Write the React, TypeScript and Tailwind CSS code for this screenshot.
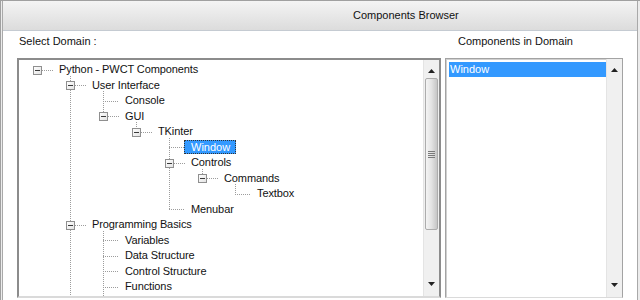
import React from "react";

type Row = { label: string; level: number; selected?: boolean; more?: boolean };

// "more" = the node has further children below the visible area
const rows: Row[] = [
  { label: "Python - PWCT Components", level: 0, more: true },
  { label: "User Interface", level: 1 },
  { label: "Console", level: 2 },
  { label: "GUI", level: 2 },
  { label: "TKinter", level: 3 },
  { label: "Window", level: 4, selected: true },
  { label: "Controls", level: 4 },
  { label: "Commands", level: 5 },
  { label: "Textbox", level: 6 },
  { label: "Menubar", level: 4 },
  { label: "Programming Basics", level: 1, more: true },
  { label: "Variables", level: 2 },
  { label: "Data Structure", level: 2 },
  { label: "Control Structure", level: 2 },
  { label: "Functions", level: 2 },
];

const ROW = 15.5;
const PAD_TOP = 2;
const cy = (i: number) => Math.round(PAD_TOP + ROW / 2 + ROW * i);
const boxX = (l: number) => 18 + 33 * l;
const textX = (l: number) => 40 + 33 * l;

const hasChildren = (i: number) => i + 1 < rows.length && rows[i + 1].level > rows[i].level;

function TreeLines() {
  const lines: React.ReactNode[] = [];
  const boxes: React.ReactNode[] = [];
  rows.forEach((r, i) => {
    const y = cy(i) + 0.5;
    if (hasChildren(i)) {
      let last = i + 1;
      for (let j = i + 1; j < rows.length && rows[j].level > r.level; j++) {
        if (rows[j].level === r.level + 1) last = j;
      }
      const vx = boxX(r.level + 1) + 0.5;
      const endY = r.more ? 240 : cy(last) + 1;
      lines.push(<line key={`v${i}`} x1={vx} x2={vx} y1={cy(i) + 6} y2={endY} />);
      lines.push(<line key={`h${i}`} x1={boxX(r.level) + 5} x2={textX(r.level) - 6} y1={y} y2={y} />);
      const bx = boxX(r.level);
      const by = cy(i);
      boxes.push(
        <g key={`b${i}`}>
          <rect x={bx - 3.5} y={by - 3.5} width={8} height={8} fill="url(#boxfill)" stroke="#8f8f8f" />
          <line x1={bx - 2} x2={bx + 3} y1={by + 0.5} y2={by + 0.5} stroke="#3a3a3a" />
        </g>
      );
    } else {
      lines.push(<line key={`h${i}`} x1={boxX(r.level)} x2={textX(r.level) - 6} y1={y} y2={y} />);
    }
  });
  return (
    <svg className="absolute left-0 top-0" width={403} height={240}>
      <defs>
        <linearGradient id="boxfill" x1="0" y1="0" x2="1" y2="1">
          <stop offset="0" stopColor="#ffffff" />
          <stop offset="1" stopColor="#e2e2e2" />
        </linearGradient>
      </defs>
      <g stroke="#9c9c9c" strokeDasharray="1 1">{lines}</g>
      {boxes}
    </svg>
  );
}

function Arrow({ down }: { down?: boolean }) {
  return (
    <svg width="7" height="4" viewBox="0 0 7 4">
      {down ? <path d="M0 0h7L3.5 4z" fill="#222" /> : <path d="M0 4h7L3.5 0z" fill="#222" />}
    </svg>
  );
}

function ScrollBar({ thumb }: { thumb?: boolean }) {
  return (
    <div className="w-[16px] h-full flex flex-col bg-[#f0f0f0] border-l border-[#e4e4e4]">
      <div className="h-[17px] flex items-end justify-center pb-[4px]">
        <Arrow />
      </div>
      <div className="flex-1 px-[1px]">
        {thumb && (
          <div className="mt-[1px] h-[152px] rounded-[2px] border border-[#acacac] bg-gradient-to-r from-[#f4f4f4] via-[#e3e3e3] to-[#c6c6c6] flex flex-col items-center justify-center gap-[1px]">
            <div className="w-[7px] h-px bg-[#7a7a7a]" />
            <div className="w-[7px] h-px bg-[#7a7a7a]" />
            <div className="w-[7px] h-px bg-[#7a7a7a]" />
            <div className="w-[7px] h-px bg-[#7a7a7a]" />
          </div>
        )}
      </div>
      <div className="h-[17px] flex items-start justify-center pt-[3px]">
        <Arrow down />
      </div>
    </div>
  );
}

export default function App() {
  return (
    <div className="w-[640px] h-[300px] overflow-hidden border-l border-t border-[#a0a0a0] pl-px pr-[2px] bg-[#ececec] font-['Liberation_Sans',Arial,sans-serif] text-[11px] text-[#111]">
      <div className="h-full flex flex-col border-l border-r border-[#a9a9a9] bg-white">
        <div className="h-[30px] shrink-0 flex items-center pl-[350px] bg-gradient-to-b from-[#f4f4f4] to-[#dcdcdc] border-b border-[#c5cbd2]">
          <span className="leading-[13px]">Components Browser</span>
        </div>

        <div className="flex-1 flex gap-[4px] pl-[14px] pt-[4px]">
          <div className="flex flex-col w-[424px]">
            <div className="leading-[13px] pl-[2px]">Select Domain :</div>
            <div className="mt-[10px] h-[240px] flex border-2 border-[#8c8c8c] border-b-[#dadada]">
              <div className="relative flex-1 overflow-hidden pt-[2px]">
                <TreeLines />
                {rows.map((r, i) => (
                  <div
                    key={i}
                    className="relative h-[15.5px] flex items-center whitespace-nowrap"
                    style={{ paddingLeft: textX(r.level) }}
                  >
                    {r.selected ? (
                      <span className="-ml-[7px] pl-[6px] pr-[5px] leading-[12px] bg-[#3399ff] text-white border border-dotted border-[#333]">
                        {r.label}
                      </span>
                    ) : (
                      <span className="leading-[13px] tracking-[-0.1px]">{r.label}</span>
                    )}
                  </div>
                ))}
              </div>
              <ScrollBar thumb />
            </div>
          </div>

          <div className="flex flex-col w-[178px]">
            <div className="leading-[13px] pl-[13px]">Components in Domain</div>
            <div className="mt-[10px] h-[240px] flex border border-[#a3a3a3] border-b-[#dadada]">
              <div className="flex-1 border-l border-t border-[#d0d0d0] pl-[2px] pt-[2px]">
                <div className="h-[15px] flex items-center bg-[#3399ff] text-white pl-[1px] leading-[13px]">Window</div>
              </div>
              <ScrollBar />
            </div>
          </div>
        </div>
      </div>
    </div>
  );
}
